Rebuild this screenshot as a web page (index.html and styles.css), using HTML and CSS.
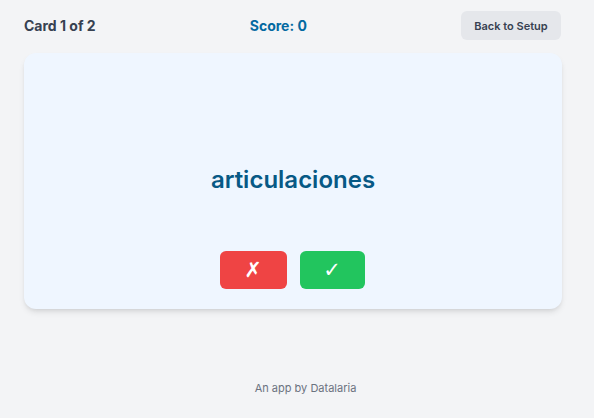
FILE: index.html
```html
<!DOCTYPE html>
<html lang="es">
<head>
<meta charset="utf-8">
<title>Flashcards</title>
<link rel="stylesheet" href="styles.css">
</head>
<body>
<div class="app">
  <header class="topbar">
    <span class="counter">Card 1 of 2</span>
    <span class="score">Score: 0</span>
    <button class="back">Back to Setup</button>
  </header>
  <main class="card">
    <div class="spacer"></div>
    <div class="word">articulaciones</div>
    <div class="actions">
      <button class="btn wrong">✗</button>
      <button class="btn right">✓</button>
    </div>
  </main>
  <footer class="footer">An app by Datalaria</footer>
</div>
</body>
</html>
```

FILE: styles.css
```css
* { box-sizing: border-box; }
html, body { margin: 0; padding: 0; }
body {
  background: #f3f4f6;
  font-family: Inter, "Noto Sans", sans-serif;
  color: #374151;
}
.app {
  width: 538px;
  margin-left: 24px;
  display: flex;
  flex-direction: column;
}
.topbar {
  display: flex;
  justify-content: space-between;
  align-items: center;
  height: 53px;
  padding-bottom: 2px;
}
.counter {
  font-size: 14px;
  font-weight: 700;
  color: #374151;
}
.score {
  font-size: 14px;
  font-weight: 700;
  color: #0369a1;
}
.back {
  font-family: inherit;
  font-size: 11px;
  font-weight: 600;
  color: #374151;
  background: #e5e7eb;
  border: none;
  border-radius: 6px;
  height: 29px;
  width: 100px;
  padding: 0;
  margin-right: 1px;
}
.card {
  background: #eff6ff;
  border-radius: 12px;
  box-shadow: 0 4px 6px -1px rgba(0,0,0,0.1), 0 2px 4px -2px rgba(0,0,0,0.1);
  height: 256px;
  padding: 20px 24px;
  display: flex;
  flex-direction: column;
  align-items: center;
}
.spacer { height: 38px; flex: none; }
.word {
  flex: 1;
  display: flex;
  align-items: center;
  justify-content: center;
  padding-bottom: 4px;
  font-size: 24px;
  font-weight: 600;
  color: #075985;
}
.actions {
  display: flex;
  gap: 13px;
  margin-left: -2px;
}
.btn {
  width: 67px;
  height: 38px;
  border: none;
  border-radius: 6px;
  color: #fff;
  font-size: 21px;
  font-weight: 700;
  font-family: "DejaVu Sans", sans-serif;
  padding: 0;
  line-height: 1;
}
.wrong { background: #ef4444; }
.right { background: #22c55e; width: 65px; }
.footer {
  text-align: center;
  font-size: 11px;
  color: #6b7280;
  margin-top: 72px;
  padding-left: 25px;
}
```
